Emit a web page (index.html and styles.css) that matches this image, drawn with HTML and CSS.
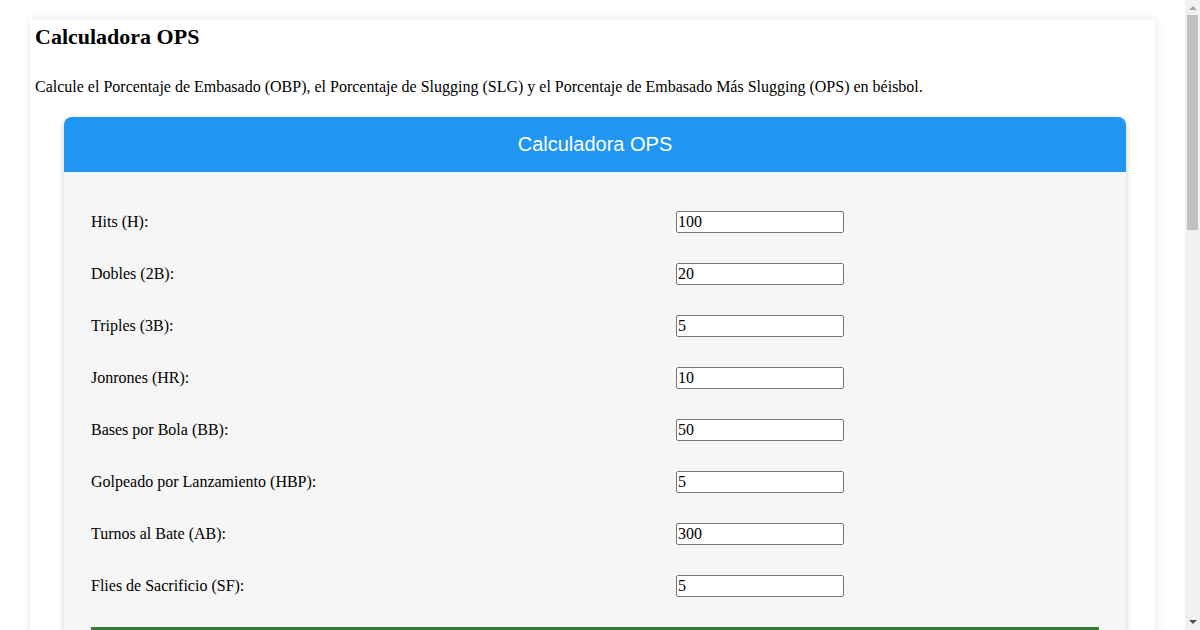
FILE: index.html
```html
<!DOCTYPE html>
<html lang="es">
<head>
<meta charset="utf-8">
<title>Calculadora OPS</title>
<link rel="stylesheet" href="styles.css">
</head>
<body>
<div class="page">
  <h1 class="title">Calculadora OPS</h1>
  <p class="intro">Calcule el Porcentaje de Embasado (OBP), el Porcentaje de Slugging (SLG) y el Porcentaje de Embasado Más Slugging (OPS) en béisbol.</p>
  <div class="card">
    <div class="card-header">Calculadora OPS</div>
    <div class="card-body">
      <div class="row"><label>Hits (H):</label><input type="text" value="100"></div>
      <div class="row"><label>Dobles (2B):</label><input type="text" value="20"></div>
      <div class="row"><label>Triples (3B):</label><input type="text" value="5"></div>
      <div class="row"><label>Jonrones (HR):</label><input type="text" value="10"></div>
      <div class="row"><label>Bases por Bola (BB):</label><input type="text" value="50"></div>
      <div class="row"><label>Golpeado por Lanzamiento (HBP):</label><input type="text" value="5"></div>
      <div class="row"><label>Turnos al Bate (AB):</label><input type="text" value="300"></div>
      <div class="row"><label>Flies de Sacrificio (SF):</label><input type="text" value="5"></div>
      <button class="calc">Calcular</button>
      <div class="results"></div>
    </div>
  </div>
</div>
<div class="scrollbar" aria-hidden="true">
  <div class="sb-arrow sb-up"></div>
  <div class="sb-thumb"></div>
  <div class="sb-arrow sb-down"></div>
</div>
</body>
</html>
```
FILE: styles.css
```css
html, body {
  margin: 0;
  padding: 0;
  background: #ffffff;
}
body {
  font-family: "Liberation Serif", "Times New Roman", serif;
  font-size: 16px;
  color: #000;
}
.page {
  margin: 20px 45px 20px 30px;
  padding: 3px 5px 5px 5px;
  background: #fff;
  box-shadow: 0 0 10px rgba(0, 0, 0, 0.1);
}
.title {
  margin: 0;
  font-size: 22px;
  line-height: 27px;
  font-weight: bold;
}
.intro {
  margin: 28px 0 21px 0;
  line-height: 18px;
}
.card {
  margin: 0 24px 0 29px;
  border-radius: 8px;
  background: #f6f6f6;
  box-shadow: 0 2px 6px rgba(0, 0, 0, 0.2);
  overflow: hidden;
}
.card-header {
  background: #2196f3;
  color: #fff;
  font-family: "Liberation Sans", Arial, sans-serif;
  font-size: 20px;
  height: 55px;
  display: flex;
  align-items: center;
  justify-content: center;
}
.card-body {
  padding: 39px 27px 30px 27px;
  display: flex;
  flex-direction: column;
  gap: 30px;
}
.row {
  display: grid;
  grid-template-columns: 585px 1fr;
  align-items: center;
  height: 22px;
}
.row input {
  box-sizing: border-box;
  width: 168px;
  height: 22px;
  font-family: "Liberation Serif", "Times New Roman", serif;
  font-size: 16px;
  padding: 1px 1px;
  border: 1px solid #767676;
  border-radius: 2px;
  background: #fff;
  color: #000;
}
.calc {
  height: 40px;
  border: none;
  background: #367c39;
  color: #fff;
  font-family: "Liberation Serif", "Times New Roman", serif;
  font-size: 16px;
}
.results {
  height: 80px;
}
.scrollbar {
  position: fixed;
  top: 0;
  right: 0;
  width: 15px;
  height: 630px;
  background: #f1f1f1;
}
.sb-thumb {
  position: absolute;
  top: 15px;
  left: 2px;
  width: 11px;
  height: 215px;
  background: #c1c1c1;
}
.sb-arrow {
  position: absolute;
  left: 4px;
  width: 0;
  height: 0;
  border-left: 4px solid transparent;
  border-right: 4px solid transparent;
}
.sb-up {
  top: 6px;
  border-bottom: 4px solid #a3a3a3;
}
.sb-down {
  bottom: 6px;
  border-top: 4px solid #505050;
}
```
